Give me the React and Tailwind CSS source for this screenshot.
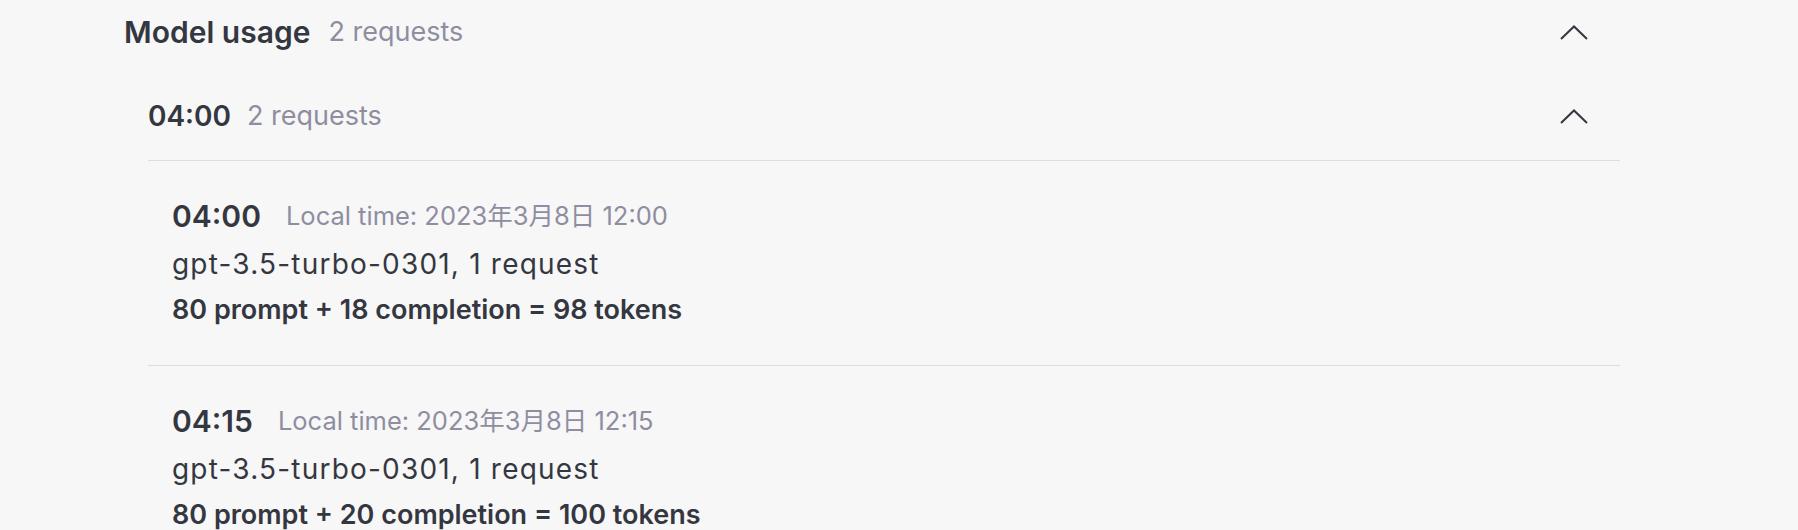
import React from "react";

const FONT = { fontFamily: 'Inter, "Noto Sans CJK JP", sans-serif' };

function Chevron() {
  return (
    <svg width="28" height="15" viewBox="0 0 28 15" fill="none" className="block">
      <polyline points="1,14 14,1.5 27,14" stroke="#353740" strokeWidth="2" fill="none" />
    </svg>
  );
}

function Item({ time, local, model, tokens }) {
  return (
    <div className="pl-[24px] pt-[38px] pb-[39px]">
      <div className="flex items-center h-[34px]">
        <span className="text-[30px] font-semibold text-[#353740] leading-[34px]">{time}</span>
        <span className="ml-[25px] text-[25.5px] text-[#8e8ea0] leading-[34px]">{local}</span>
      </div>
      <div className="mt-[13px] h-[36px] text-[28px] font-normal tracking-[1.2px] text-[#353740] leading-[36px]">{model}</div>
      <div className="mt-[12px] h-[32px] text-[27px] font-semibold text-[#353740] leading-[32px]">{tokens}</div>
    </div>
  );
}

export default function App() {
  return (
    <div className="min-h-screen w-full bg-[#f7f7f8]" style={FONT}>
      <div className="ml-[124px] w-[1496px]">
        <div className="flex h-[64px] items-center justify-between pr-[32px]">
          <div className="flex items-center gap-[18px]">
            <span className="text-[30px] font-semibold text-[#353740]">Model usage</span>
            <span className="text-[27px] text-[#8e8ea0]">2 requests</span>
          </div>
          <Chevron />
        </div>
        <div className="ml-[24px]">
          <div className="mt-[20px] flex h-[64px] items-center justify-between pr-[32px]">
            <div className="flex items-center gap-[16px]">
              <span className="text-[28px] font-semibold text-[#353740]">04:00</span>
              <span className="text-[27px] text-[#8e8ea0]">2 requests</span>
            </div>
            <Chevron />
          </div>
          <div className="mt-[12px] h-px bg-[#dcdce2]" />
          <Item
            time="04:00"
            local="Local time: 2023年3月8日 12:00"
            model="gpt-3.5-turbo-0301, 1 request"
            tokens="80 prompt + 18 completion = 98 tokens"
          />
          <div className="h-px bg-[#dcdce2]" />
          <Item
            time="04:15"
            local="Local time: 2023年3月8日 12:15"
            model="gpt-3.5-turbo-0301, 1 request"
            tokens="80 prompt + 20 completion = 100 tokens"
          />
        </div>
      </div>
    </div>
  );
}
